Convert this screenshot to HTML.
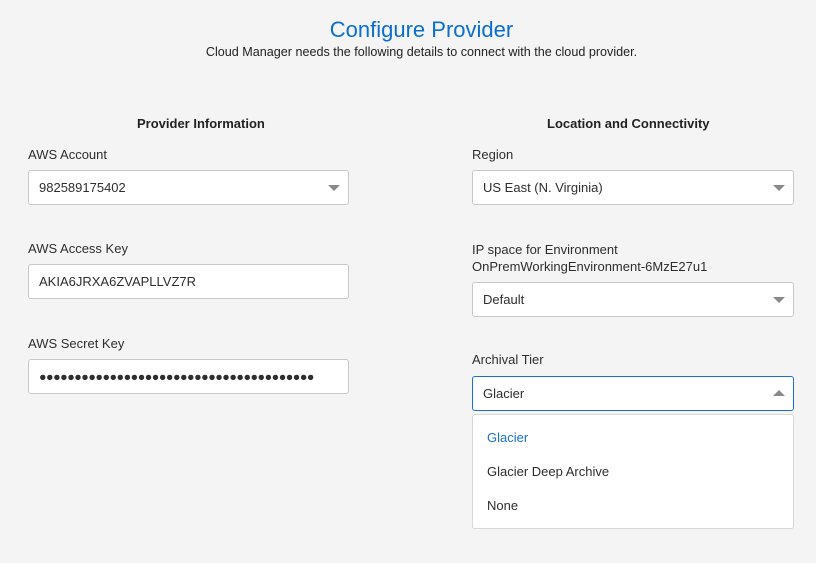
<!DOCTYPE html>
<html><head><style>
body{margin:0;width:816px;height:563px;background:#f4f4f4;font-family:"Liberation Sans",Arial,sans-serif;color:#2e2e2e;position:relative;overflow:hidden}
.a{position:absolute;white-space:nowrap}
.t{font-size:13px}
.box{position:absolute;background:#fff;border:1px solid #c8c8c8;border-radius:3px;box-sizing:border-box;font-size:13px;padding-left:10px;display:flex;align-items:center}
.dn::after{content:"";position:absolute;right:8px;top:14px;border-left:6px solid transparent;border-right:6px solid transparent;border-top:6px solid #8a8a8a}
.up::after{content:"";position:absolute;right:8px;top:13px;border-left:6px solid transparent;border-right:6px solid transparent;border-bottom:6px solid #8a8a8a}
</style></head><body>
<div class="a" style="left:0;width:843px;text-align:center;top:17px;font-size:22px;color:#0a6fd2">Configure Provider</div>
<div class="a" style="left:0;width:843px;text-align:center;top:45px;color:#222;font-size:12.6px">Cloud Manager needs the following details to connect with the cloud provider.</div>
<div class="a t" style="left:137px;top:116px;font-weight:bold;color:#222">Provider Information</div>
<div class="a t" style="left:547px;top:116px;font-weight:bold;color:#222">Location and Connectivity</div>

<div class="a t" style="left:28px;top:147px">AWS Account</div>
<div class="box dn" style="left:28px;top:170px;width:321px;height:35px">982589175402</div>
<div class="a t" style="left:28px;top:241px">AWS Access Key</div>
<div class="box" style="left:28px;top:264px;width:321px;height:35px">AKIA6JRXA6ZVAPLLVZ7R</div>
<div class="a t" style="left:28px;top:336px">AWS Secret Key</div>
<div class="box" style="left:28px;top:359px;width:321px;height:35px;font-size:12.5px;letter-spacing:-0.5px">●●●●●●●●●●●●●●●●●●●●●●●●●●●●●●●●●●●●●●●</div>

<div class="a t" style="left:472px;top:147px">Region</div>
<div class="box dn" style="left:472px;top:170px;width:322px;height:35px">US East (N. Virginia)</div>
<div class="a t" style="left:472px;top:241px;line-height:17px">IP space for Environment<br>OnPremWorkingEnvironment-6MzE27u1</div>
<div class="box dn" style="left:472px;top:282px;width:322px;height:35px">Default</div>
<div class="a t" style="left:472px;top:352px">Archival Tier</div>
<div class="box up" style="left:472px;top:376px;width:322px;height:35px;border:1.5px solid #1a6fc9">Glacier</div>
<div class="a" style="left:472px;top:414px;width:322px;height:115px;background:#fff;border:1px solid #d8d8d8;border-radius:3px;box-sizing:border-box"></div>
<div class="a t" style="left:487px;top:430px;color:#1a6fc9">Glacier</div>
<div class="a t" style="left:487px;top:464px">Glacier Deep Archive</div>
<div class="a t" style="left:487px;top:498px">None</div>
</body></html>
